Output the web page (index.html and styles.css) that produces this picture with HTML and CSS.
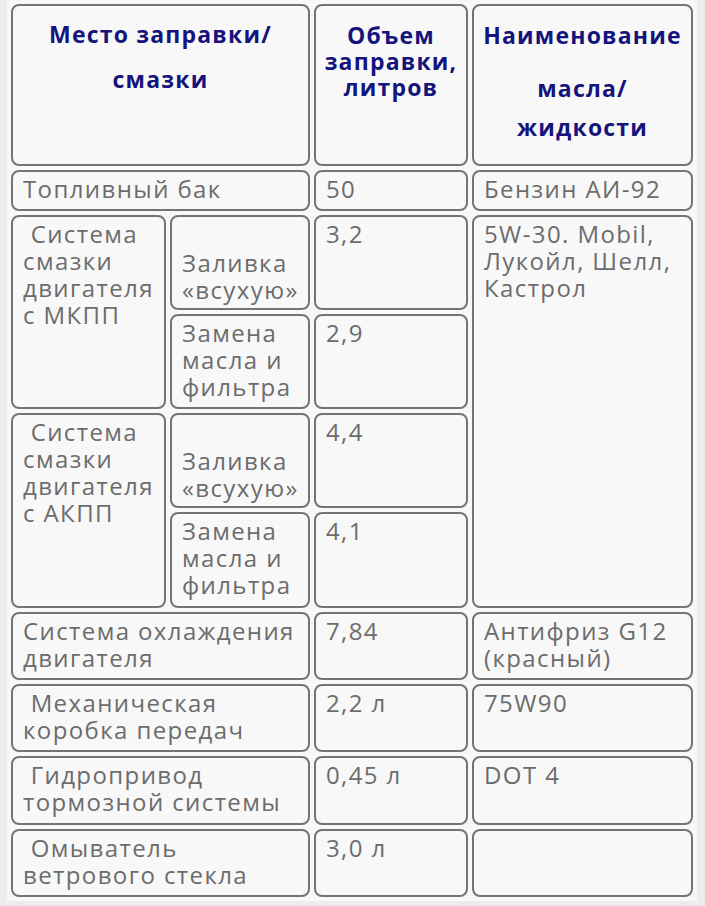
FILE: index.html
```html
<!DOCTYPE html>
<html lang="ru">
<head>
<meta charset="utf-8">
<title>Заправочные объемы</title>
<link rel="stylesheet" href="styles.css">
</head>
<body>
<div class="sheet">
  <div class="tbl">
    <div class="cell head head-place span2"><div class="hl">Место заправки/</div><div class="hl">смазки</div></div>
    <div class="cell head head-vol"><div class="hl">Объем</div><div class="hl">заправки,</div><div class="hl">литров</div></div>
    <div class="cell head head-name"><div class="hl n1">Наименование</div><div class="hl n2">масла/</div><div class="hl n3">жидкости</div></div>

    <div class="cell span2">Топливный бак</div>
    <div class="cell">50</div>
    <div class="cell">Бензин АИ-92</div>

    <div class="cell rspan2">&nbsp;Система<br>смазки<br>двигателя<br>с МКПП</div>
    <div class="cell bottom">Заливка<br>«всухую»</div>
    <div class="cell">3,2</div>
    <div class="cell rspan4">5W-30. Mobil,<br>Лукойл, Шелл,<br>Кастрол</div>
    <div class="cell">Замена<br>масла и<br>фильтра</div>
    <div class="cell">2,9</div>

    <div class="cell rspan2">&nbsp;Система<br>смазки<br>двигателя<br>с АКПП</div>
    <div class="cell bottom">Заливка<br>«всухую»</div>
    <div class="cell">4,4</div>
    <div class="cell">Замена<br>масла и<br>фильтра</div>
    <div class="cell">4,1</div>

    <div class="cell span2">Система охлаждения<br>двигателя</div>
    <div class="cell">7,84</div>
    <div class="cell">Антифриз G12<br>(красный)</div>

    <div class="cell span2">&nbsp;Механическая<br>коробка передач</div>
    <div class="cell">2,2 л</div>
    <div class="cell">75W90</div>

    <div class="cell span2">&nbsp;Гидропривод<br>тормозной системы</div>
    <div class="cell">0,45 л</div>
    <div class="cell">DOT 4</div>

    <div class="cell span2">&nbsp;Омыватель<br>ветрового стекла</div>
    <div class="cell">3,0 л</div>
    <div class="cell"></div>
  </div>
</div>
</body>
</html>
```
FILE: styles.css
```css
html, body {
  margin: 0;
  padding: 0;
  background: #ececec;
}
body {
  font-family: "Open Sans", "Noto Sans", "DejaVu Sans", sans-serif;
}
.sheet {
  margin-left: 7px;
  width: 690px;
  background: #f8f8f8;
}
.tbl {
  display: grid;
  grid-template-columns: 155px 140px 154px 221px;
  grid-template-rows: 162px 41px 95px 95px 95px 96px 68px 68px 69px 68px;
  gap: 4px;
  padding: 4px;
}
.cell {
  border: 2px solid #747474;
  border-radius: 8px;
  padding: 3px 2px 0 10px;
  font-size: 24px;
  line-height: 27px;
  letter-spacing: 1.4px;
  color: #6c6c6c;
  white-space: nowrap;
  overflow: hidden;
  background: #f8f8f8;
}
.span2 { grid-column: span 2; }
.rspan2 { grid-row: span 2; }
.rspan4 { grid-row: span 4; }
.bottom {
  display: flex;
  flex-direction: column;
  justify-content: flex-end;
  padding-bottom: 5px;
}
.head {
  text-align: center;
  font-weight: 700;
  color: #14147c;
  font-size: 23px;
  letter-spacing: 1.2px;
  padding: 0 2px;
}
.head-place { padding-top: 6px; line-height: 45px; }
.head-vol { padding-top: 16px; line-height: 26px; }
.head-name { padding-top: 16px; line-height: 26px; }
.head-name .n2 { margin-top: 27px; }
.head-name .n3 { margin-top: 13px; }
```
